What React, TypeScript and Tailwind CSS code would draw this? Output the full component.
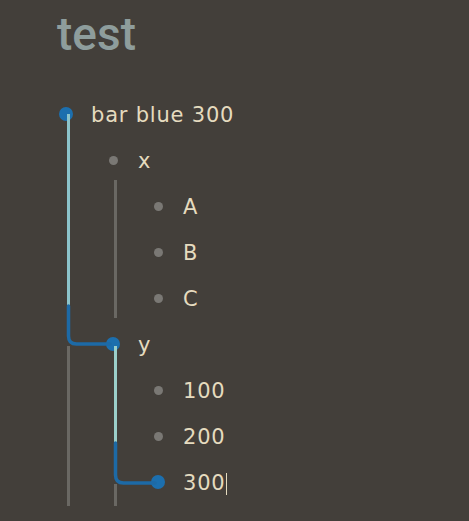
type Item = { text: string; level: number; active?: boolean; cursor?: boolean };

const items: Item[] = [
  { text: 'bar blue 300', level: 0, active: true },
  { text: 'x', level: 1 },
  { text: 'A', level: 2 },
  { text: 'B', level: 2 },
  { text: 'C', level: 2 },
  { text: 'y', level: 1, active: true },
  { text: '100', level: 2 },
  { text: '200', level: 2 },
  { text: '300', level: 2, active: true, cursor: true },
];

const indent = ['pl-0', 'pl-[47px]', 'pl-[92px]'];

function Bullet({ active }: { active?: boolean }) {
  return (
    <div className="w-[14px] h-[14px] flex items-center justify-center shrink-0">
      {active ? (
        <span className="block w-[14px] h-[14px] rounded-full bg-[#1c6fae]" />
      ) : (
        <span className="block w-[9px] h-[9px] rounded-full bg-[#7a7874]" />
      )}
    </div>
  );
}

// guide lines drawn over the outline
function Guides() {
  return (
    <svg className="absolute left-0 top-0 pointer-events-none" width="469" height="521">
      <g fill="none" strokeWidth="3">
        <line x1="68.5" y1="346" x2="68.5" y2="506" stroke="#6a6863" />
        <line x1="115.5" y1="180" x2="115.5" y2="318" stroke="#6a6863" />
        <line x1="115.5" y1="484" x2="115.5" y2="506" stroke="#6a6863" />
        <line x1="68.5" y1="114" x2="68.5" y2="307" stroke="#8cc4cb" />
        <line x1="115.5" y1="346" x2="115.5" y2="444" stroke="#9bcfca" />
      </g>
      <g fill="none" stroke="#1d6aa6" strokeWidth="3.5" strokeLinecap="round">
        <path d="M68.5 306 V336 Q68.5 344 76.5 344 H110" />
        <path d="M115.5 443 V475 Q115.5 483 123.5 483 H155" />
      </g>
    </svg>
  );
}

export default function App() {
  return (
    <div className="relative w-[469px] h-[521px] bg-[#433f3a] overflow-hidden">
      <h1 className="pl-[57px] pt-[6px] h-[91px] text-[46px] leading-[56px] font-medium text-[#8e9d9c] font-['Roboto',sans-serif]">
        test
      </h1>
      <div className="pl-[59px] font-['DejaVu_Sans',sans-serif]">
        {items.map((it, i) => (
          <div key={i} className={`flex items-center h-[46px] ${indent[it.level]}`}>
            <Bullet active={it.active} />
            <span className="ml-[18px] pt-[3px] text-[21px] tracking-[0.8px] text-[#e5dbbf] flex items-center">
              {it.text}
              {it.cursor && <span className="inline-block w-px h-[22px] bg-[#e5dbbf] ml-px" />}
            </span>
          </div>
        ))}
      </div>
      <Guides />
    </div>
  );
}
